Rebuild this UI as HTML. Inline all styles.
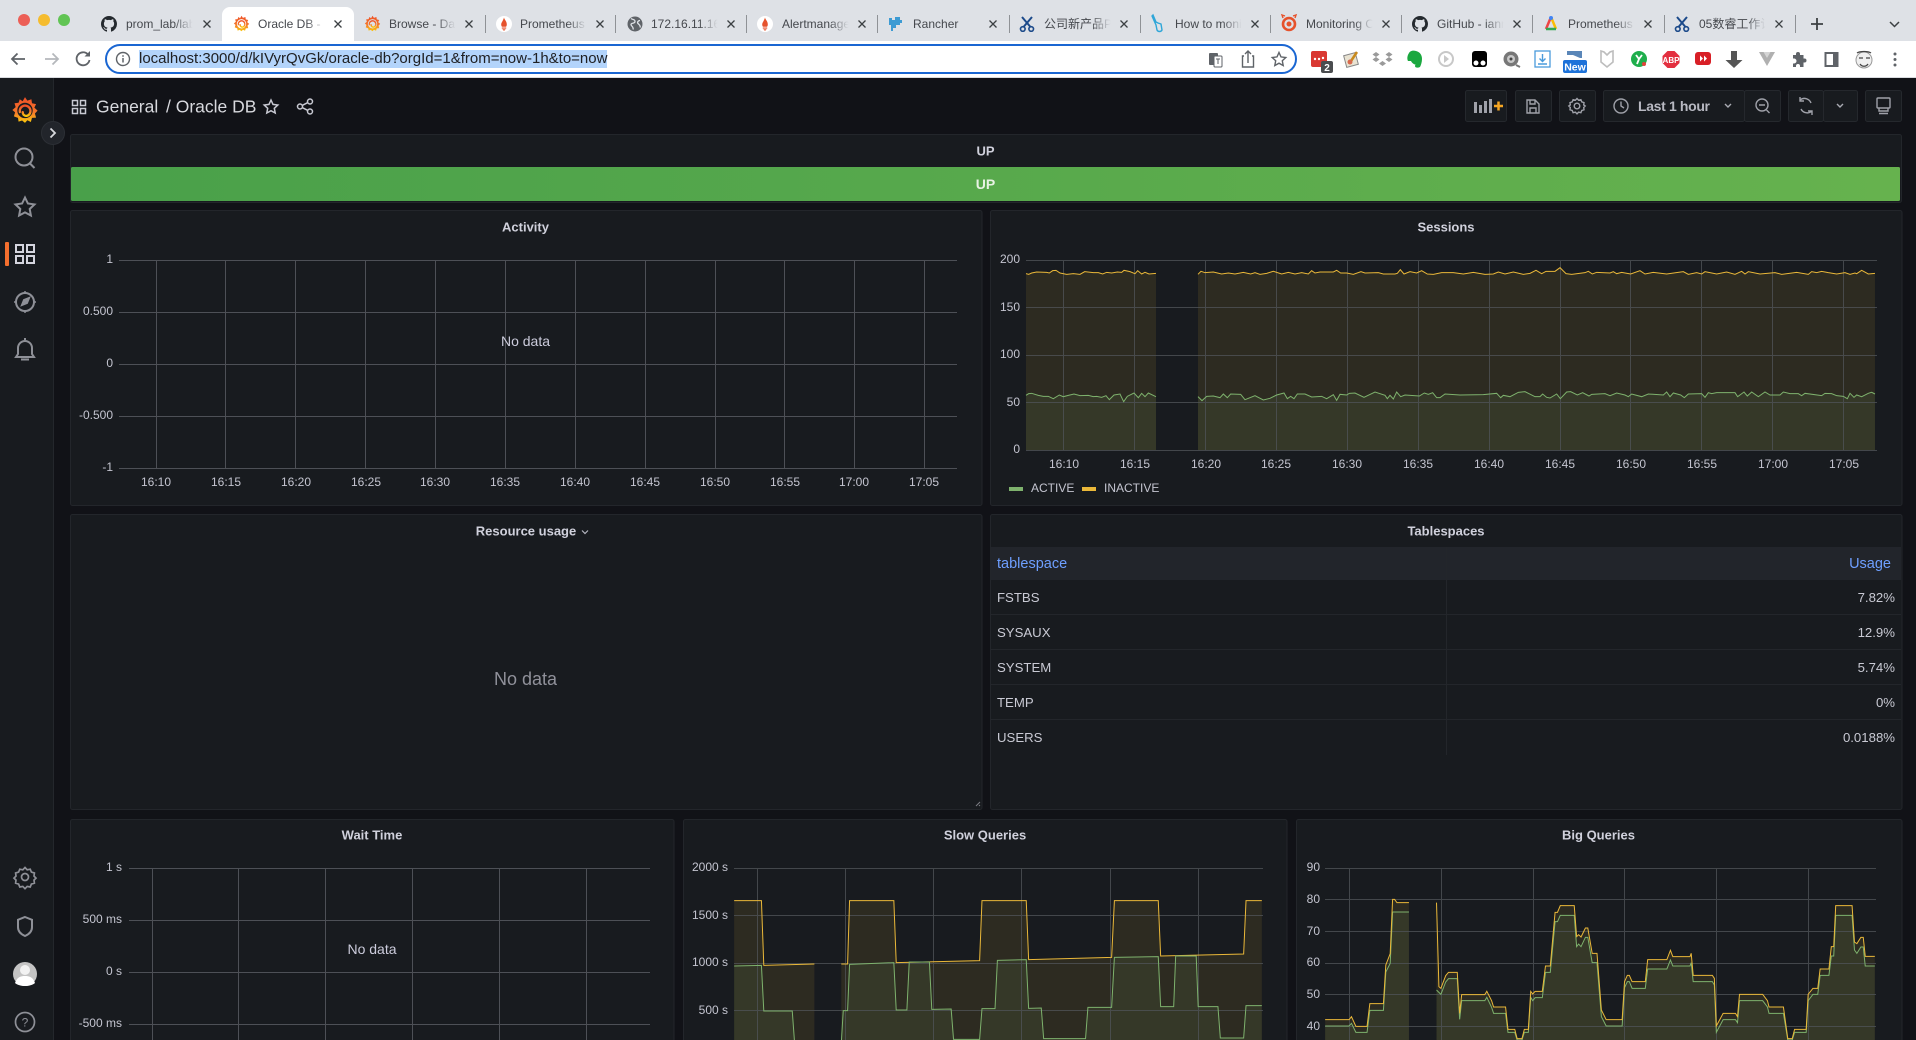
<!DOCTYPE html>
<html><head><meta charset="utf-8"><title>Oracle DB</title>
<style>
html,body{margin:0;padding:0;width:1916px;height:1040px;overflow:hidden;background:#111217;font-family:"Liberation Sans","Noto Sans CJK SC",sans-serif}
.abs{position:absolute}
#strip{position:absolute;left:0;top:0;width:1916px;height:41px;background:#dee1e6}
#tb{position:absolute;left:0;top:41px;width:1916px;height:36px;background:#fff;border-bottom:1px solid #d9dbdf}
.t{position:absolute;top:16px;height:16px;line-height:16px;font-size:12px;color:#45484d;width:68px;white-space:nowrap;overflow:hidden;-webkit-mask-image:linear-gradient(90deg,#000 70%,transparent 98%);mask-image:linear-gradient(90deg,#000 70%,transparent 98%)}
#active{position:absolute;left:222px;top:7px;width:132px;height:34px;background:#fff;border-radius:8px 8px 0 0}
#omni{position:absolute;left:105px;top:44px;width:1188px;height:26px;border:2px solid #1a66d2;border-radius:15px;background:#fff}
#url{position:absolute;left:139px;top:50px;height:18px;line-height:18px;font-size:15px;color:#202124;background:#b3d4fb;white-space:nowrap}
svg text{font-family:"Liberation Sans","Noto Sans CJK SC",sans-serif}
.l{position:absolute;left:0;top:0}
.lbl{font-size:12px;fill:#c4c5d0}
.ttl{font-size:13px;font-weight:bold;fill:#d0d1dc;text-anchor:middle}
.row{font-size:13.2px;fill:#c9cad4}
.hd{font-size:14.5px;fill:#6e9fff}
</style></head><body>
<div id="strip"></div>
<div id="active"></div>
<div id="tb"></div>
<div id="omni"></div>
<div id="url">localhost:3000/d/kIVyrQvGk/oracle-db?orgId=1&amp;from=now-1h&amp;to=now</div>

<div class="t" style="left:126px">prom_lab/lab</div>
<div class="t" style="left:258px">Oracle DB - Gr</div>
<div class="t" style="left:389px">Browse - Das</div>
<div class="t" style="left:520px">Prometheus Ti</div>
<div class="t" style="left:651px">172.16.11.16:</div>
<div class="t" style="left:782px">Alertmanager</div>
<div class="t" style="left:913px">Rancher</div>
<div class="t" style="left:1044px">公司新产品PO</div>
<div class="t" style="left:1175px">How to monit</div>
<div class="t" style="left:1306px">Monitoring Or</div>
<div class="t" style="left:1437px">GitHub - iann</div>
<div class="t" style="left:1568px">Prometheus</div>
<div class="t" style="left:1699px">05数睿工作记录</div>

<svg class="l" width="1916" height="1040" viewBox="0 0 1916 1040" xmlns="http://www.w3.org/2000/svg">
<defs>
<linearGradient id="gfg" x1="0" y1="0" x2="0" y2="1"><stop offset="0" stop-color="#ee4f27"/><stop offset=".6" stop-color="#f4792b"/><stop offset="1" stop-color="#fbca0a"/></linearGradient>
<linearGradient id="upg" x1="0" y1="0" x2="1" y2="0"><stop offset="0" stop-color="#49a04a"/><stop offset="1" stop-color="#66b24e"/></linearGradient>
<symbol id="gf" viewBox="0 0 24 24"><path fill="url(#gfg)" fill-rule="evenodd" d="M12 1 14 4 17.500 2.800 18 6.200 21.500 7 20 10 22.800 12.500 20.500 15 21.500 18.500 18 18.800 17 22.300 14 20.800 12 23 9.500 21 6.500 22 6 18.800 2.500 17.500 3.500 14 1.200 12 4 9.500 3 6.200 6.500 5.800 7.500 2.800 10 4.500Z M12 5.800a6.600 6.600 0 1 0 0 13.200 6.600 6.600 0 0 0 0-13.200Z"/><path fill="none" stroke="url(#gfg)" stroke-width="2" d="M7.800 14.500A4.600 4.600 0 1 1 15.200 16.200 3 3 0 0 1 10.300 13"/></symbol>
<symbol id="gh" viewBox="0 0 16 16"><path fill="#24292e" d="M8 0C3.58 0 0 3.58 0 8c0 3.54 2.29 6.53 5.47 7.59.4.07.55-.17.55-.38 0-.19-.01-.82-.01-1.49-2.01.37-2.53-.49-2.69-.94-.09-.23-.48-.94-.82-1.13-.28-.15-.68-.52-.01-.53.63-.01 1.08.58 1.23.82.72 1.21 1.87.87 2.33.66.07-.52.28-.87.51-1.07-1.78-.2-3.64-.89-3.64-3.95 0-.87.31-1.59.82-2.15-.08-.2-.36-1.02.08-2.12 0 0 .67-.21 2.2.82.64-.18 1.32-.27 2-.27.68 0 1.36.09 2 .27 1.53-1.04 2.2-.82 2.2-.82.44 1.1.16 1.92.08 2.12.51.56.82 1.27.82 2.15 0 3.07-1.87 3.75-3.65 3.95.29.25.54.73.54 1.48 0 1.07-.01 1.93-.01 2.2 0 .21.15.46.55.38A8.013 8.013 0 0016 8c0-4.42-3.58-8-8-8z"/></symbol>
<symbol id="pr" viewBox="0 0 16 16"><circle cx="8" cy="8" r="8" fill="#fff"/><path fill="#e6522c" d="M8 1.500C8.500 4 10.800 5 10.800 8.500 10.800 9.500 10.500 10.200 10 10.800H6C5.500 10.200 5.200 9.500 5.200 8.500 5.200 6.500 7 5 8 1.500ZM5.800 11.500H10.200V12.600H5.800ZM6.500 13.200H9.500C9.300 14 8.700 14.500 8 14.500S6.700 14 6.500 13.200Z"/></symbol>
<symbol id="x" viewBox="0 0 16 16"><path stroke="#1c4a8a" stroke-width="2" fill="none" d="M3 1 11.500 11M13 1 4.500 11"/><circle cx="3.800" cy="13" r="2.300" fill="none" stroke="#1c4a8a" stroke-width="1.600"/><circle cx="12.200" cy="13" r="2.300" fill="none" stroke="#1c4a8a" stroke-width="1.600"/></symbol>
<symbol id="cl" viewBox="0 0 10 10"><path d="M1.500 1.500 8.500 8.500M8.500 1.500 1.500 8.500" stroke="#3c4043" stroke-width="1.300" fill="none"/></symbol>
</defs>

<!-- traffic lights -->
<circle cx="24" cy="20" r="6" fill="#ec5f57"/><circle cx="44" cy="20" r="6" fill="#f5bc2f"/><circle cx="64" cy="20" r="6" fill="#61c454"/>
<!-- tab separators -->
<path d="M485.500 15V33M615.500 15V33M746.500 15V33M877.500 15V33M1009.500 15V33M1140.500 15V33M1270.500 15V33M1401.500 15V33M1532.500 15V33M1664.500 15V33M1795.500 15V33" stroke="#8f9296" stroke-width="1" fill="none"/>
<!-- favicons -->
<use href="#gh" x="101" y="16" width="16" height="16"/>
<use href="#gf" x="233" y="15" width="17" height="17"/>
<use href="#gf" x="364" y="15" width="17" height="17"/>
<use href="#pr" x="496" y="16" width="16" height="16"/>
<circle cx="635" cy="24" r="7.500" fill="#5f6368"/><path d="M631 18.500c2 1.500 4 .5 4 3s-4 1-4 3 3 2 2 5M640 20.500c-2 0-3 2-2 3s3 2 2 4" stroke="#dee1e6" stroke-width="1.300" fill="none"/>
<use href="#pr" x="757" y="16" width="16" height="16"/>
<path fill="#3d9bd3" d="M889 18h3v2h3v-3h5v3h2v3h-2v2h-4v3h-3v3h-2v-6h-2z"/>
<use href="#x" x="1019" y="16" width="16" height="16"/>
<path d="M1152 16l4 9 1 5c1 2 4 2 5 0l-1-6-3-1-2-1-3-7z" fill="none" stroke="#2fa6d8" stroke-width="1.400"/>
<circle cx="1289" cy="24" r="6" fill="none" stroke="#e6522c" stroke-width="2.600"/><circle cx="1289" cy="24" r="2.500" fill="#e6522c"/><path d="M1283 18l-1-3 3 1M1295 18l1-3-3 1" stroke="#e6522c" fill="none" stroke-width="1.400"/>
<use href="#gh" x="1412" y="16" width="16" height="16"/>
<path d="M1551 17l-5 12" stroke="#e44" stroke-width="2.500"/><path d="M1551 17l5 12" stroke="#fbbc04" stroke-width="2.500"/><path d="M1546 29h10" stroke="#34a853" stroke-width="2.500"/><circle cx="1551" cy="18" r="2" fill="#4285f4"/>
<use href="#x" x="1674" y="16" width="16" height="16"/>
<!-- close X -->
<use href="#cl" x="202" y="19" width="10" height="10"/><use href="#cl" x="333" y="19" width="10" height="10"/><use href="#cl" x="464" y="19" width="10" height="10"/><use href="#cl" x="595" y="19" width="10" height="10"/><use href="#cl" x="726" y="19" width="10" height="10"/><use href="#cl" x="857" y="19" width="10" height="10"/><use href="#cl" x="988" y="19" width="10" height="10"/><use href="#cl" x="1119" y="19" width="10" height="10"/><use href="#cl" x="1250" y="19" width="10" height="10"/><use href="#cl" x="1381" y="19" width="10" height="10"/><use href="#cl" x="1512" y="19" width="10" height="10"/><use href="#cl" x="1643" y="19" width="10" height="10"/><use href="#cl" x="1774" y="19" width="10" height="10"/>
<!-- new tab / chevron -->
<path d="M1817 18V30M1811 24H1823" stroke="#3c4043" stroke-width="1.800" fill="none"/>
<path d="M1890 22l4.500 4.500 4.500-4.500" stroke="#3c4043" stroke-width="1.500" fill="none"/>
<!-- nav -->
<path d="M25 59H12M17.500 53.500 12 59l5.500 5.500" stroke="#5f6368" stroke-width="1.800" fill="none"/>
<path d="M45 59H58M52.500 53.500 58 59l-5.500 5.500" stroke="#b5b8bc" stroke-width="1.800" fill="none"/>
<path d="M88 54.500A6.500 6.500 0 1 0 89.500 60" stroke="#5f6368" stroke-width="1.800" fill="none"/><path d="M90 51v5.500h-5.500z" fill="#5f6368"/>
<circle cx="123" cy="59" r="6.500" stroke="#5f6368" stroke-width="1.400" fill="none"/><path d="M123 58v4.500M123 55.300v1.400" stroke="#5f6368" stroke-width="1.500"/>
<!-- omnibox right -->
<rect x="1209" y="53" width="9" height="12" fill="#5f6368" rx="1"/><rect x="1214" y="56" width="8" height="11" fill="#fff" stroke="#5f6368" rx="1"/><path d="M1216 59h4M1218 59v5" stroke="#5f6368"/>
<path d="M1244 56h-1.500v11h11V56H1252M1248 63V51.500M1245 54l3-3 3 3" stroke="#5f6368" stroke-width="1.400" fill="none"/>
<path d="M1279 52.500l2 4.400 4.800.6-3.500 3.300.9 4.700-4.200-2.300-4.200 2.300.9-4.700-3.500-3.300 4.800-.6z" stroke="#5f6368" stroke-width="1.400" fill="none"/>
<!-- extensions -->
<rect x="1311" y="51" width="16" height="16" rx="2" fill="#d93832"/><circle cx="1315" cy="59" r="1.200" fill="#fff"/><circle cx="1319" cy="59" r="1.200" fill="#fff"/><circle cx="1323" cy="58" r="1.200" fill="#fff"/>
<rect x="1321" y="61" width="12" height="12" rx="2" fill="#4a4c4f"/><text x="1327" y="71" font-size="10" font-weight="bold" fill="#fff" text-anchor="middle">2</text>
<rect x="1345" y="54" width="12" height="12" fill="#e9e3d2" stroke="#888" transform="rotate(-15 1351 60)"/><path d="M1351 61l6-9" stroke="#c98a1b" stroke-width="2.500"/><circle cx="1350" cy="62" r="2.500" fill="#d86a4d"/>
<path fill="#9a9a9a" d="M1376 53l3.500 2.500-3.500 2.500 3.500 2.500-3.500 2.500-3.500-2.500 3.500-2.500-3.500-2.500zM1389 53l3.500 2.500-3.500 2.500 3.500 2.500-3.500 2.500-3.500-2.500 3.500-2.500-3.500-2.500zM1382.500 62l3.500 2.500-3.500 2.500-3.500-2.500z" transform="translate(0 -1)"/>
<path fill="#1ba83f" d="M1409 53c1-2 4-3 7-2 4 1 6 4 6 8 0 3-1 6-2 8-2 1-5 1-5-1s3-2 3-1c-4 0-6-2-7-4h-3c-1-2-1-5 1-8z"/>
<circle cx="1446" cy="59" r="7" fill="none" stroke="#c8c8c8" stroke-width="2"/><path d="M1444 55v8l5-4z" fill="#c8c8c8"/>
<rect x="1472" y="51" width="15" height="16" rx="3" fill="#000"/><circle cx="1476" cy="63" r="2.500" fill="#fff"/><circle cx="1483" cy="63" r="2.500" fill="#fff"/>
<circle cx="1511" cy="59" r="7.500" fill="#777"/><circle cx="1511" cy="59" r="4" fill="#c9c9c9"/><circle cx="1511" cy="59" r="1.500" fill="#444"/><path d="M1516 65l4 2" stroke="#777" stroke-width="2"/>
<rect x="1535" y="51" width="15" height="16" fill="#fff" stroke="#4a9bdc" stroke-width="1.300"/><path d="M1542.500 54v7M1539.500 58.500l3 3 3-3M1538 64h9" stroke="#4a9bdc" stroke-width="1.400" fill="none"/>
<path d="M1567 51h15v7h-2l-7-3h-6z" fill="#5a86b8"/><rect x="1563" y="60" width="24" height="13" rx="2" fill="#1e72d9"/><text x="1575" y="70.500" font-size="10.500" font-weight="bold" fill="#fff" text-anchor="middle">New</text>
<path d="M1601 51l3 1 3 3 3-3 3-1v11l-6 5-6-5z" fill="#fff" stroke="#bdbdbd" stroke-width="1.600"/>
<circle cx="1639" cy="59" r="8" fill="#1fae4c"/><path d="M1636 55l3 4 3-4M1639 59l-2 5" stroke="#fff" stroke-width="1.800" fill="none"/><circle cx="1644" cy="64" r="2" fill="#e0433a"/>
<path d="M1667.500 51h7l5 5v7l-5 5h-7l-5-5v-7z" fill="#e32f3f"/><text x="1671" y="63" font-size="8" font-weight="bold" fill="#fff" text-anchor="middle">ABP</text>
<rect x="1695" y="52" width="16" height="13" rx="3" fill="#d81f26"/><path d="M1700 55.500v6l3-3zM1704 55.500v6l3-3z" fill="#fff"/>
<path d="M1731 51h6v9h5.500l-8.500 8-8.500-8h5.500z" fill="#555"/>
<path d="M1759 52h6l2 3 2-3h6l-8 14z" fill="#b0b0b0"/><path d="M1763.500 52h7l-3.500 6z" fill="#d5d5d5"/>
<path d="M1793 55h3v-1a2 2 0 0 1 4 0v1h3.500v3.500h1a2 2 0 0 1 0 4h-1V67H1800v-1a2 2 0 0 0-4 0v1h-3v-3.500h1a2.500 2.500 0 0 0 0-5h-1z" fill="#5f6368"/>
<rect x="1825.500" y="53" width="12" height="13" fill="none" stroke="#5f6368" stroke-width="2"/><rect x="1833" y="53" width="5" height="13" fill="#5f6368"/>
<circle cx="1864" cy="60" r="8" fill="#f0f0f0" stroke="#999"/><path d="M1857 53c3-2 11-2 14 0M1859 58h4M1866 58h4M1860 64c2 3 6 3 8 0" stroke="#444" fill="none" stroke-width="1.300"/>
<circle cx="1895" cy="54" r="1.500" fill="#5f6368"/><circle cx="1895" cy="59.500" r="1.500" fill="#5f6368"/><circle cx="1895" cy="65" r="1.500" fill="#5f6368"/>

<!-- Grafana shell -->
<rect x="0" y="78" width="53.500" height="962" fill="#181b1f"/>
<path d="M53.500 78V1040" stroke="#24272c"/>
<use href="#gf" x="11" y="96" width="28" height="28"/>
<circle cx="53" cy="133" r="11.500" fill="#22252b" stroke="#2c2f35"/><path d="M50.500 128.500l4.500 4.500-4.500 4.500" stroke="#d8d9de" stroke-width="1.800" fill="none"/>
<g fill="none" stroke="#8e9097" stroke-width="2">
<circle cx="24" cy="157" r="8.500"/><path d="M30 163.500l4.500 4.500"/>
<path d="M25 197.500l2.900 6 6.600.9-4.800 4.600 1.200 6.500-5.900-3.100-5.900 3.100 1.200-6.500-4.800-4.600 6.600-.9z"/>
<circle cx="25" cy="302" r="9"/><path d="M25 291v3M25 310v3M14 302h3M33 302h3" stroke-width="1.500"/><path d="M22 305l2-5 5-2-2 5z" fill="#8e9097"/>
<path d="M18 354v-6a7 7 0 0 1 14 0v6l2 3H16zM25 340v-2M21 359.500h8" />
<path d="M25 867.500l2.200 2.300 3-.6 1.200 2.900 3 .9-.4 3.100 2 2-2 2 .4 3.100-3 .9-1.200 2.900-3-.6-2.200 2.300-2.200-2.300-3 .6-1.200-2.900-3-.9.400-3.100-2-2 2-2-.4-3.100 3-.9 1.200-2.900 3 .6z" stroke-width="1.700"/><circle cx="25" cy="877" r="3.500" stroke-width="1.700"/>
<path d="M25 917l7 2.800v7.400c0 4-3 7-7 8.800-4-1.800-7-4.800-7-8.800v-7.400z"/>
<circle cx="25" cy="1022" r="9.500" stroke-width="1.700"/>
</g>
<text x="25" y="1026.500" font-size="12" fill="#8e9097" text-anchor="middle">?</text>
<g fill="none" stroke="#d4d5de" stroke-width="2"><rect x="16" y="245" width="7" height="7"/><rect x="27" y="245" width="7" height="7"/><rect x="16" y="256" width="7" height="7"/><rect x="27" y="256" width="7" height="7"/></g>
<rect x="5" y="242" width="4" height="24" rx="1" fill="#f46f2e"/>
<circle cx="25" cy="974" r="12" fill="#c4c4c4"/><circle cx="25" cy="970" r="5" fill="#f2f2f2"/><path d="M15 983c2-6 6-7 10-7s8 1 10 7c-5 4-15 4-20 0z" fill="#fff"/>

<!-- breadcrumb -->
<g fill="none" stroke="#c8c9d2" stroke-width="1.500"><rect x="72.500" y="100.500" width="5" height="5"/><rect x="80.500" y="100.500" width="5" height="5"/><rect x="72.500" y="108.500" width="5" height="5"/><rect x="80.500" y="108.500" width="5" height="5"/></g>
<text x="96" y="112.500" font-size="17.500" fill="#d8d9de">General</text>
<text x="166" y="112.500" font-size="17.500" fill="#d8d9de">/ Oracle DB</text>
<path d="M271 100l2 4.400 4.800.6-3.500 3.300.9 4.700-4.200-2.300-4.200 2.300.9-4.700-3.500-3.300 4.800-.6z" fill="none" stroke="#c8c9d2" stroke-width="1.500"/>
<g fill="none" stroke="#c8c9d2" stroke-width="1.500"><circle cx="310" cy="101.500" r="2.500"/><circle cx="300" cy="106.500" r="2.500"/><circle cx="310" cy="111.500" r="2.500"/><path d="M302.200 105.400l5.600-2.800M302.200 107.600l5.600 2.800"/></g>

<!-- toolbar buttons -->
<g fill="#181b1f" stroke="#25282d">
<rect x="1465.500" y="90.500" width="41" height="31" rx="2"/><rect x="1515.500" y="90.500" width="36" height="31" rx="2"/><rect x="1559.500" y="90.500" width="36" height="31" rx="2"/><rect x="1603.500" y="90.500" width="141" height="31" rx="2"/><rect x="1744.500" y="90.500" width="36" height="31" rx="2"/><rect x="1788.500" y="90.500" width="35" height="31" rx="2"/><rect x="1823.500" y="90.500" width="34" height="31" rx="2"/><rect x="1865.500" y="90.500" width="36" height="31" rx="2"/>
</g>
<path d="M1474 102h3v11h-3zM1479 105h3v8h-3zM1484 101h3v12h-3zM1489 99h3v14h-3z" fill="#9fa1a9"/><path d="M1494 106h9M1498.500 101.500v9" stroke="#f5a623" stroke-width="2.500"/>
<g fill="none" stroke="#9fa1a9" stroke-width="1.400">
<path d="M1527 100h8l4 4v9h-12zM1530 100v4h5v-4M1530 113v-5h6v5"/>
<circle cx="1577" cy="106" r="2.800"/><path d="M1577 98.500l1.600 1.700 2.300-.5.900 2.200 2.200.7-.3 2.300 1.500 1.100-1.500 1.500.3 2.300-2.200.7-.9 2.200-2.300-.5-1.600 1.700-1.600-1.700-2.300.5-.9-2.200-2.200-.7.300-2.300-1.500-1.500 1.500-1.100-.3-2.300 2.200-.7.900-2.200 2.300.5z"/>
<circle cx="1621" cy="106" r="7"/><path d="M1621 101.500V106l3 2"/>
<circle cx="1762" cy="105" r="6"/><path d="M1759 105h6M1766.500 110l3 3"/>
<path d="M1800 100a7 7 0 0 1 11 3M1812 111a7 7 0 0 1-11-2M1800 97v4h4M1812 115v-4h-4"/>
<rect x="1877" y="98" width="13" height="10" rx="1"/><path d="M1879 108v3h9v-3M1879 113.500h9"/>
</g>
<text x="1638" y="111" font-size="14" font-weight="bold" fill="#b8b9c2" textLength="72">Last 1 hour</text>
<path d="M1725 104l3 3 3-3M1837 104l3 3 3-3" fill="none" stroke="#a9abb3" stroke-width="1.400"/>

<!-- PANELS -->
<g fill="#181b1f" stroke="#23262b">
<rect x="70.500" y="134.500" width="1831" height="68" rx="2"/>
<rect x="70.500" y="210.500" width="911.500" height="295" rx="2"/>
<rect x="990.500" y="210.500" width="911.500" height="295" rx="2"/>
<rect x="70.500" y="514.500" width="911.500" height="295" rx="2"/>
<rect x="990.500" y="514.500" width="911.500" height="295" rx="2"/>
<rect x="70.500" y="819.500" width="603.500" height="240" rx="2"/>
<rect x="683.500" y="819.500" width="603.500" height="240" rx="2"/>
<rect x="1296.500" y="819.500" width="605.500" height="240" rx="2"/>
</g>
<rect x="71" y="167" width="1829" height="34" rx="1.500" fill="url(#upg)"/>
<text x="985.500" y="155.500" class="ttl">UP</text>
<text x="985.500" y="189" font-size="14" font-weight="bold" text-anchor="middle" fill="#e8f2e4">UP</text>
<text x="525.500" y="231.500" class="ttl">Activity</text>
<text x="1446" y="231.500" class="ttl">Sessions</text>
<text x="526" y="535.500" class="ttl">Resource usage</text>
<path d="M582 530.500l3 3 3-3" stroke="#b5b6c0" stroke-width="1.200" fill="none"/>
<text x="1446" y="535.500" class="ttl">Tablespaces</text>
<text x="372" y="839.500" class="ttl">Wait Time</text>
<text x="985" y="839.500" class="ttl">Slow Queries</text>
<text x="1598.500" y="839.500" class="ttl">Big Queries</text>

<!-- Activity -->
<path shape-rendering="crispEdges" stroke="#4d5056" fill="none" d="M119 260.500H957M119 312.500H957M119 364.500H957M119 416.500H957M119 468.500H957M156.500 260V468M225.500 260V468M295.500 260V468M365.500 260V468M435.500 260V468M505.500 260V468M575.500 260V468M645.500 260V468M715.500 260V468M784.500 260V468M854.500 260V468M924.500 260V468"/>
<g class="lbl" text-anchor="end"><text x="113" y="263">1</text><text x="113" y="315">0.500</text><text x="113" y="367">0</text><text x="113" y="419">-0.500</text><text x="113" y="471">-1</text></g>
<g class="lbl" text-anchor="middle"><text x="156" y="486">16:10</text><text x="226" y="486">16:15</text><text x="296" y="486">16:20</text><text x="366" y="486">16:25</text><text x="435" y="486">16:30</text><text x="505" y="486">16:35</text><text x="575" y="486">16:40</text><text x="645" y="486">16:45</text><text x="715" y="486">16:50</text><text x="785" y="486">16:55</text><text x="854" y="486">17:00</text><text x="924" y="486">17:05</text></g>
<text x="525.500" y="346" font-size="14" fill="#ccccdc" text-anchor="middle">No data</text>

<!-- Sessions -->
<g transform="translate(980 200) scale(.33333)">
<polygon fill="#eab839" fill-opacity=".1" points="138,221 146,223 155,219 170,216 200,217 208,219 218,212 228,211 240,219 260,223 280,221 300,223 314,215 340,218 355,218 368,222 380,217 395,219 412,216 425,217 432,211 450,215 465,221 473,212 485,222 495,217 507,222 528,220 528,750 138,750"/>
<polygon fill="#7eb26d" fill-opacity=".1" points="138,586 146,581 155,580 175,586 190,589 205,589 220,596 238,585 250,590 265,586 282,582 300,587 325,586 340,590 350,589 365,592 378,587 388,599 402,585 420,582 431,605 442,589 462,579 475,593 485,580 495,590 505,579 528,590 528,750 138,750"/>
<polygon fill="#eab839" fill-opacity=".1" points="654,223 663,214 675,218 700,216 725,222 745,219 765,222 790,217 812,222 825,218 840,223 860,220 880,214 905,222 925,217 945,222 965,218 985,222 995,212 1005,219 1020,216 1040,216 1060,216 1070,211 1082,219 1100,219 1120,223 1143,215 1155,219 1195,218 1210,222 1245,222 1252,220 1261,209 1272,222 1290,215 1310,219 1325,212 1342,222 1360,223 1385,218 1420,218 1450,222 1480,217 1515,223 1540,222 1555,216 1575,222 1600,216 1630,223 1650,220 1668,211 1685,221 1698,214 1725,214 1740,203 1758,221 1775,223 1815,218 1825,214 1837,222 1850,217 1890,219 1900,215 1910,221 1925,217 1952,222 1980,212 1995,222 2020,217 2060,222 2110,215 2125,223 2150,218 2165,222 2175,215 2210,222 2240,216 2265,223 2285,214 2295,222 2305,215 2340,222 2385,218 2405,223 2450,217 2485,223 2495,215 2510,218 2525,214 2545,218 2570,222 2595,218 2610,223 2625,219 2630,221 2645,211 2665,222 2685,220 2685,750 654,750"/>
<polygon fill="#7eb26d" fill-opacity=".1" points="654,590 666,602 680,589 700,588 720,593 730,582 742,593 752,582 782,583 795,599 825,587 850,600 870,595 890,585 912,579 922,596 932,589 942,596 952,582 975,582 995,591 1025,589 1040,596 1060,584 1070,601 1080,583 1100,585 1108,580 1125,579 1152,592 1185,576 1215,586 1222,596 1230,586 1240,597 1250,576 1262,590 1275,585 1318,588 1333,579 1345,583 1358,578 1370,593 1380,593 1395,582 1440,585 1510,584 1550,580 1562,593 1570,586 1590,590 1615,577 1635,575 1665,590 1680,590 1688,582 1700,592 1710,594 1730,582 1741,596 1760,576 1772,575 1792,585 1808,578 1827,588 1835,583 1875,581 1890,587 1910,579 1935,585 1945,590 1955,582 1985,590 2005,582 2050,585 2060,576 2070,590 2080,579 2102,585 2113,593 2125,582 2165,581 2175,592 2185,578 2195,581 2210,578 2265,578 2273,590 2292,576 2302,588 2315,576 2335,590 2355,576 2370,585 2400,585 2410,576 2430,581 2455,581 2465,587 2475,580 2525,587 2535,580 2555,581 2570,587 2590,589 2602,596 2610,580 2622,592 2630,585 2645,590 2665,580 2675,577 2685,582 2685,750 654,750"/>
</g>
<path shape-rendering="crispEdges" stroke="#4f5256" stroke-opacity=".8" fill="none" d="M1026 260.500H1877M1026 307.500H1877M1026 355.500H1877M1026 402.500H1877M1026 450.500H1877M1063.500 260V450M1134.500 260V450M1205.500 260V450M1276.500 260V450M1347.500 260V450M1418.500 260V450M1489.500 260V450M1560.500 260V450M1630.500 260V450M1701.500 260V450M1772.500 260V450M1843.500 260V450"/>
<g transform="translate(980 200) scale(.33333)" fill="none" stroke-width="1">
<polyline vector-effect="non-scaling-stroke" stroke="#eab839" points="138,221 146,223 155,219 170,216 200,217 208,219 218,212 228,211 240,219 260,223 280,221 300,223 314,215 340,218 355,218 368,222 380,217 395,219 412,216 425,217 432,211 450,215 465,221 473,212 485,222 495,217 507,222 528,220"/>
<polyline vector-effect="non-scaling-stroke" stroke="#7eb26d" points="138,586 146,581 155,580 175,586 190,589 205,589 220,596 238,585 250,590 265,586 282,582 300,587 325,586 340,590 350,589 365,592 378,587 388,599 402,585 420,582 431,605 442,589 462,579 475,593 485,580 495,590 505,579 528,590"/>
<polyline vector-effect="non-scaling-stroke" stroke="#eab839" points="654,223 663,214 675,218 700,216 725,222 745,219 765,222 790,217 812,222 825,218 840,223 860,220 880,214 905,222 925,217 945,222 965,218 985,222 995,212 1005,219 1020,216 1040,216 1060,216 1070,211 1082,219 1100,219 1120,223 1143,215 1155,219 1195,218 1210,222 1245,222 1252,220 1261,209 1272,222 1290,215 1310,219 1325,212 1342,222 1360,223 1385,218 1420,218 1450,222 1480,217 1515,223 1540,222 1555,216 1575,222 1600,216 1630,223 1650,220 1668,211 1685,221 1698,214 1725,214 1740,203 1758,221 1775,223 1815,218 1825,214 1837,222 1850,217 1890,219 1900,215 1910,221 1925,217 1952,222 1980,212 1995,222 2020,217 2060,222 2110,215 2125,223 2150,218 2165,222 2175,215 2210,222 2240,216 2265,223 2285,214 2295,222 2305,215 2340,222 2385,218 2405,223 2450,217 2485,223 2495,215 2510,218 2525,214 2545,218 2570,222 2595,218 2610,223 2625,219 2630,221 2645,211 2665,222 2685,220"/>
<polyline vector-effect="non-scaling-stroke" stroke="#7eb26d" points="654,590 666,602 680,589 700,588 720,593 730,582 742,593 752,582 782,583 795,599 825,587 850,600 870,595 890,585 912,579 922,596 932,589 942,596 952,582 975,582 995,591 1025,589 1040,596 1060,584 1070,601 1080,583 1100,585 1108,580 1125,579 1152,592 1185,576 1215,586 1222,596 1230,586 1240,597 1250,576 1262,590 1275,585 1318,588 1333,579 1345,583 1358,578 1370,593 1380,593 1395,582 1440,585 1510,584 1550,580 1562,593 1570,586 1590,590 1615,577 1635,575 1665,590 1680,590 1688,582 1700,592 1710,594 1730,582 1741,596 1760,576 1772,575 1792,585 1808,578 1827,588 1835,583 1875,581 1890,587 1910,579 1935,585 1945,590 1955,582 1985,590 2005,582 2050,585 2060,576 2070,590 2080,579 2102,585 2113,593 2125,582 2165,581 2175,592 2185,578 2195,581 2210,578 2265,578 2273,590 2292,576 2302,588 2315,576 2335,590 2355,576 2370,585 2400,585 2410,576 2430,581 2455,581 2465,587 2475,580 2525,587 2535,580 2555,581 2570,587 2590,589 2602,596 2610,580 2622,592 2630,585 2645,590 2665,580 2675,577 2685,582"/>
</g>
<g class="lbl" text-anchor="end"><text x="1020" y="263">200</text><text x="1020" y="311">150</text><text x="1020" y="358">100</text><text x="1020" y="406">50</text><text x="1020" y="453">0</text></g>
<g class="lbl" text-anchor="middle"><text x="1064" y="468">16:10</text><text x="1135" y="468">16:15</text><text x="1206" y="468">16:20</text><text x="1276" y="468">16:25</text><text x="1347" y="468">16:30</text><text x="1418" y="468">16:35</text><text x="1489" y="468">16:40</text><text x="1560" y="468">16:45</text><text x="1631" y="468">16:50</text><text x="1702" y="468">16:55</text><text x="1773" y="468">17:00</text><text x="1844" y="468">17:05</text></g>
<rect x="1009" y="487" width="14" height="4" fill="#7eb26d"/><text x="1031" y="492" class="lbl">ACTIVE</text>
<rect x="1082" y="487" width="14" height="4" fill="#eab839"/><text x="1104" y="492" class="lbl">INACTIVE</text>

<!-- Resource usage -->
<text x="525.500" y="685" font-size="18" fill="#90919a" text-anchor="middle">No data</text>
<path d="M976 806l4-4M979 806l1-1" stroke="#7b7d84"/>

<!-- Tablespaces -->
<rect x="991" y="547" width="910" height="33" fill="#22252b"/>
<path shape-rendering="crispEdges" stroke="#23262b" fill="none" d="M991 614.500H1901M991 649.500H1901M991 684.500H1901M991 719.500H1901M1446.500 547V755"/>
<text x="997" y="568" class="hd">tablespace</text><text x="1891" y="568" class="hd" text-anchor="end">Usage</text>
<g class="row"><text x="997" y="602">FSTBS</text><text x="997" y="637">SYSAUX</text><text x="997" y="672">SYSTEM</text><text x="997" y="707">TEMP</text><text x="997" y="742">USERS</text></g>
<g class="row" text-anchor="end"><text x="1895" y="602">7.82%</text><text x="1895" y="637">12.9%</text><text x="1895" y="672">5.74%</text><text x="1895" y="707">0%</text><text x="1895" y="742">0.0188%</text></g>

<!-- Wait Time -->
<path shape-rendering="crispEdges" stroke="#4d5056" fill="none" d="M129 868.500H650M129 920.500H650M129 972.500H650M129 1024.500H650M152.500 868V1040M238.500 868V1040M325.500 868V1040M412.500 868V1040M499.500 868V1040M586.500 868V1040"/>
<g class="lbl" text-anchor="end"><text x="122" y="871">1 s</text><text x="122" y="923">500 ms</text><text x="122" y="975">0 s</text><text x="122" y="1027">-500 ms</text></g>
<text x="372" y="954" font-size="14" fill="#ccccdc" text-anchor="middle">No data</text>

<!-- Slow Queries -->
<g transform="translate(680 810) scale(.39526 .33333)">
<polygon fill="#eab839" fill-opacity=".1" points="137,272 206,272 212,466 340,462 340,700 137,700"/>
<polygon fill="#eab839" fill-opacity=".1" points="408,462 424,462 429,272 541,272 547,458 758,452 764,272 876,272 882,449 1092,442 1099,272 1210,272 1216,438 1426,432 1432,272 1472,272 1472,700 408,700"/>
<polygon fill="#7eb26d" fill-opacity=".1" points="137,468 206,466 212,603 284,603 290,700 137,700"/>
<polygon fill="#7eb26d" fill-opacity=".1" points="408,700 413,602 424,602 429,463 541,458 547,600 574,600 580,456 631,456 637,598 686,597 692,688 758,688 764,596 797,596 803,451 876,449 882,595 914,594 920,686 1026,686 1032,592 1092,592 1099,442 1210,440 1216,590 1249,590 1254,438 1306,438 1311,590 1361,590 1367,684 1426,684 1432,587 1472,587 1472,700"/>
</g>
<path shape-rendering="crispEdges" stroke="#4f5256" stroke-opacity=".8" fill="none" d="M734 868.500H1263M734 915.500H1263M734 963.500H1263M734 1010.500H1263M757.500 868V1040M845.500 868V1040M933.500 868V1040M1021.500 868V1040M1110.500 868V1040M1198.500 868V1040"/>
<g class="lbl" text-anchor="end"><text x="728" y="871">2000 s</text><text x="728" y="919">1500 s</text><text x="728" y="966">1000 s</text><text x="728" y="1014">500 s</text></g>
<g transform="translate(680 810) scale(.39526 .33333)" fill="none" stroke-width="1">
<polyline vector-effect="non-scaling-stroke" stroke="#eab839" points="137,272 206,272 212,466 340,462"/>
<polyline vector-effect="non-scaling-stroke" stroke="#eab839" points="408,462 424,462 429,272 541,272 547,458 758,452 764,272 876,272 882,449 1092,442 1099,272 1210,272 1216,438 1426,432 1432,272 1472,272"/>
<polyline vector-effect="non-scaling-stroke" stroke="#7eb26d" points="137,468 206,466 212,603 284,603 290,700"/>
<polyline vector-effect="non-scaling-stroke" stroke="#7eb26d" points="408,700 413,602 424,602 429,463 541,458 547,600 574,600 580,456 631,456 637,598 686,597 692,688 758,688 764,596 797,596 803,451 876,449 882,595 914,594 920,686 1026,686 1032,592 1092,592 1099,442 1210,440 1216,590 1249,590 1254,438 1306,438 1311,590 1361,590 1367,684 1426,684 1432,587 1472,587"/>
</g>

<!-- Big Queries -->
<g transform="translate(1290 810) scale(.3992 .33333)">
<polygon fill="#eab839" fill-opacity=".1" points="88,629 148,629 154,620 165,649 193,649 200,581 234,581 240,465 251,431 257,268 262,268 268,278 298,278 298,700 88,700"/>
<polygon fill="#eab839" fill-opacity=".1" points="367,278 373,530 378,535 390,497 397,487 419,487 425,610 430,554 488,554 493,544 505,572 510,591 540,591 546,658 563,658 569,686 581,686 587,658 597,658 603,544 608,552 614,544 632,544 640,468 652,468 664,307 670,307 677,287 712,287 718,380 723,374 729,381 740,354 746,354 757,430 769,430 780,600 792,629 832,629 838,515 845,496 850,496 857,515 890,515 896,449 944,449 953,421 959,440 1002,440 1005,430 1010,496 1058,496 1063,505 1068,648 1085,610 1116,610 1121,620 1126,553 1184,553 1196,572 1200,591 1236,591 1247,686 1258,686 1264,658 1293,658 1298,553 1310,535 1322,535 1328,477 1350,477 1356,410 1362,410 1367,287 1408,287 1414,396 1420,401 1430,382 1436,382 1441,439 1465,439 1465,700 367,700"/>
<polygon fill="#7eb26d" fill-opacity=".1" points="88,648 148,648 154,640 165,667 193,667 200,601 234,601 240,486 251,460 257,306 298,306 298,700 88,700"/>
<polygon fill="#7eb26d" fill-opacity=".1" points="367,540 378,553 390,516 397,506 419,506 425,628 430,572 488,572 493,562 505,592 510,610 540,610 546,667 563,667 569,690 581,690 587,667 597,667 603,562 608,572 614,563 632,563 640,487 652,487 664,335 670,335 677,316 712,316 718,410 723,402 729,410 740,382 746,382 757,458 769,458 780,620 792,648 832,648 838,533 845,515 850,515 857,535 890,535 896,477 944,477 953,450 959,468 1002,468 1005,458 1010,515 1058,515 1063,525 1068,667 1085,629 1116,629 1121,638 1126,572 1184,572 1196,591 1200,610 1236,610 1247,690 1258,690 1264,667 1293,667 1298,572 1310,553 1322,553 1328,496 1350,496 1356,438 1362,438 1367,316 1408,316 1414,420 1420,430 1430,411 1436,411 1441,468 1465,468 1465,700 367,700"/>
</g>
<path shape-rendering="crispEdges" stroke="#4f5256" stroke-opacity=".8" fill="none" d="M1325 868.500H1876M1325 899.500H1876M1325 931.500H1876M1325 963.500H1876M1325 994.500H1876M1325 1026.500H1876M1349.500 868V1040M1441.500 868V1040M1533.500 868V1040M1624.500 868V1040M1716.500 868V1040M1808.500 868V1040"/>
<g class="lbl" text-anchor="end"><text x="1320" y="871">90</text><text x="1320" y="903">80</text><text x="1320" y="935">70</text><text x="1320" y="966">60</text><text x="1320" y="998">50</text><text x="1320" y="1030">40</text></g>
<g transform="translate(1290 810) scale(.3992 .33333)" fill="none" stroke-width="1">
<polyline vector-effect="non-scaling-stroke" stroke="#7eb26d" points="88,648 148,648 154,640 165,667 193,667 200,601 234,601 240,486 251,460 257,306 298,306"/>
<polyline vector-effect="non-scaling-stroke" stroke="#7eb26d" points="367,540 378,553 390,516 397,506 419,506 425,628 430,572 488,572 493,562 505,592 510,610 540,610 546,667 563,667 569,690 581,690 587,667 597,667 603,562 608,572 614,563 632,563 640,487 652,487 664,335 670,335 677,316 712,316 718,410 723,402 729,410 740,382 746,382 757,458 769,458 780,620 792,648 832,648 838,533 845,515 850,515 857,535 890,535 896,477 944,477 953,450 959,468 1002,468 1005,458 1010,515 1058,515 1063,525 1068,667 1085,629 1116,629 1121,638 1126,572 1184,572 1196,591 1200,610 1236,610 1247,690 1258,690 1264,667 1293,667 1298,572 1310,553 1322,553 1328,496 1350,496 1356,438 1362,438 1367,316 1408,316 1414,420 1420,430 1430,411 1436,411 1441,468 1465,468"/>
<polyline vector-effect="non-scaling-stroke" stroke="#eab839" points="88,629 148,629 154,620 165,649 193,649 200,581 234,581 240,465 251,431 257,268 262,268 268,278 298,278"/>
<polyline vector-effect="non-scaling-stroke" stroke="#eab839" points="367,278 373,530 378,535 390,497 397,487 419,487 425,610 430,554 488,554 493,544 505,572 510,591 540,591 546,658 563,658 569,686 581,686 587,658 597,658 603,544 608,552 614,544 632,544 640,468 652,468 664,307 670,307 677,287 712,287 718,380 723,374 729,381 740,354 746,354 757,430 769,430 780,600 792,629 832,629 838,515 845,496 850,496 857,515 890,515 896,449 944,449 953,421 959,440 1002,440 1005,430 1010,496 1058,496 1063,505 1068,648 1085,610 1116,610 1121,620 1126,553 1184,553 1196,572 1200,591 1236,591 1247,686 1258,686 1264,658 1293,658 1298,553 1310,535 1322,535 1328,477 1350,477 1356,410 1362,410 1367,287 1408,287 1414,396 1420,401 1430,382 1436,382 1441,439 1465,439"/>
</g>
</svg>
</body></html>
